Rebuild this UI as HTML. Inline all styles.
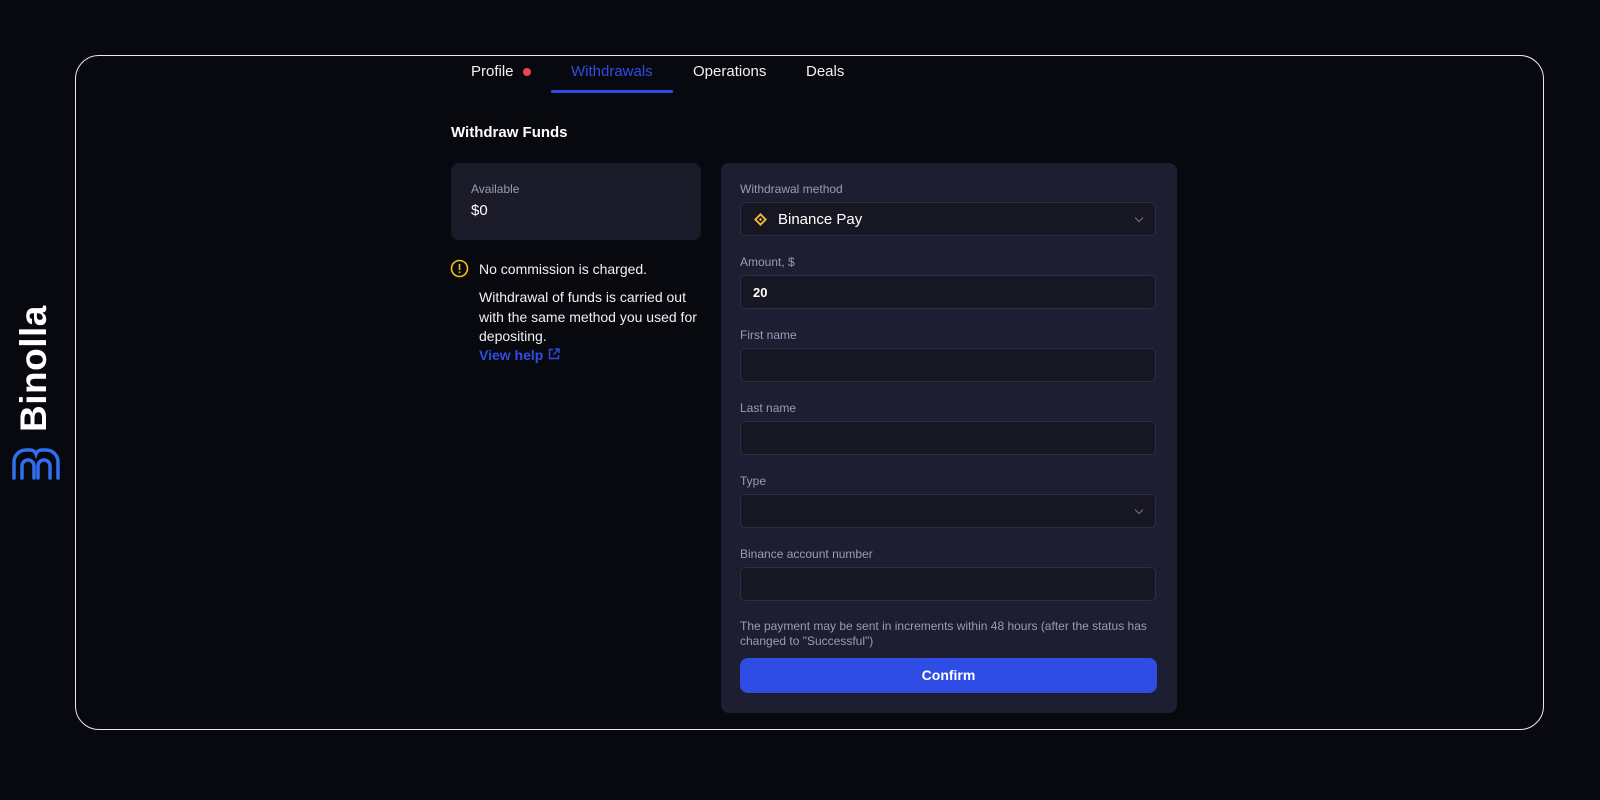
<!DOCTYPE html>
<html><head><meta charset="utf-8"><style>
*{margin:0;padding:0;box-sizing:border-box}
body{width:1600px;height:800px;background:#08090f;font-family:"Liberation Sans",sans-serif;position:relative;overflow:hidden;color:#fff}
.frame{position:absolute;left:75px;top:55px;width:1469px;height:675px;border:1px solid #e8e8ee;border-radius:24px}
.abs{position:absolute}
.tab{position:absolute;top:63px;font-size:15px;color:#f0f0f5}
.lbl{position:absolute;left:740px;font-size:12px;color:#9b9cb2}
.inp{position:absolute;left:740px;width:416px;height:34px;background:#171723;border:1px solid #2c2d41;border-radius:5px}
.chev{position:absolute;right:13px;top:12px;width:6px;height:6px;border-right:1px solid #777;border-bottom:1px solid #777;transform:rotate(45deg)}
</style></head><body>
<div class="frame"></div>
<div class="abs" style="left:15px;top:432px;transform-origin:0 0;transform:rotate(-90deg);font-size:37px;font-weight:bold;letter-spacing:0.5px;line-height:37px">Binolla</div>
<svg class="abs" style="left:10px;top:446px" width="52" height="34" viewBox="0 0 52 34"><g fill="none" stroke="#2f6ff0" stroke-width="3.5" stroke-linecap="round"><path d="M4 32V16a12 12 0 0 1 12-12h4a6 6 0 0 1 6 4a6 6 0 0 1 6-4h4a12 12 0 0 1 12 12V32"/><path d="M12 32V20a6 6 0 0 1 12 0V32"/><path d="M28 32V20a6 6 0 0 1 12 0V32"/></g></svg>

<div class="tab" style="left:471px">Profile</div>
<div class="abs" style="left:523px;top:68px;width:8px;height:8px;border-radius:50%;background:#f0434a"></div>
<div class="tab" style="left:571px;color:#2f4de5">Withdrawals</div>
<div class="abs" style="left:551px;top:90px;width:122px;height:3px;background:#2f4de5;border-radius:1px"></div>
<div class="tab" style="left:693px">Operations</div>
<div class="tab" style="left:806px">Deals</div>

<div class="abs" style="left:451px;top:124px;font-size:15px;font-weight:bold">Withdraw Funds</div>

<div class="abs" style="left:451px;top:163px;width:250px;height:77px;background:#1a1a28;border-radius:8px"></div>
<div class="abs" style="left:471px;top:182px;font-size:12px;color:#9b9cb2">Available</div>
<div class="abs" style="left:471px;top:202px;font-size:15px">$0</div>

<svg class="abs" style="left:450px;top:259px" width="19" height="19" viewBox="0 0 19 19"><circle cx="9.5" cy="9.5" r="8" fill="none" stroke="#f1c40f" stroke-width="1.6"/><rect x="8.7" y="5" width="1.6" height="6" fill="#f1c40f"/><rect x="8.7" y="12.5" width="1.6" height="1.6" fill="#f1c40f"/></svg>
<div class="abs" style="left:479px;top:261px;font-size:14px;color:#f0f0f5">No commission is charged.</div>
<div class="abs" style="left:479px;top:288px;font-size:14px;line-height:19.5px;color:#f0f0f5;width:230px">Withdrawal of funds is carried out with the same method you used for depositing.</div>
<div class="abs" style="left:479px;top:347px;font-size:14px;font-weight:bold;color:#2f4de5">View help</div>
<svg class="abs" style="left:548px;top:348px" width="12" height="12" viewBox="0 0 12 12"><g fill="none" stroke="#2f4de5" stroke-width="1.4"><path d="M5 1.5H1.5v9h9V7"/><path d="M7 1h4v4M11 1L5.5 6.5"/></g></svg>

<div class="abs" style="left:721px;top:163px;width:456px;height:550px;background:#1d1e31;border-radius:8px"></div>

<div class="lbl" style="top:182px">Withdrawal method</div>
<div class="inp" style="top:202px"><svg class="abs" style="left:12px;top:9px" width="15" height="15" viewBox="0 0 16 16"><g fill="none" stroke="#f3ba2f" stroke-width="2"><path d="M8 2.5L13.5 8 8 13.5 2.5 8z"/></g><path d="M8 6.3L9.7 8 8 9.7 6.3 8z" fill="#f3ba2f"/></svg><div class="abs" style="left:37px;top:8px;font-size:15px">Binance Pay</div><div class="chev"></div></div>

<div class="lbl" style="top:255px">Amount, $</div>
<div class="inp" style="top:275px"><div class="abs" style="left:12px;top:9px;font-size:13px;font-weight:bold">20</div></div>

<div class="lbl" style="top:328px">First name</div>
<div class="inp" style="top:348px"></div>

<div class="lbl" style="top:401px">Last name</div>
<div class="inp" style="top:421px"></div>

<div class="lbl" style="top:474px">Type</div>
<div class="inp" style="top:494px"><div class="chev"></div></div>

<div class="lbl" style="top:547px">Binance account number</div>
<div class="inp" style="top:567px"></div>

<div class="lbl" style="top:619px;width:420px;line-height:15px">The payment may be sent in increments within 48 hours (after the status has changed to "Successful")</div>

<div class="abs" style="left:740px;top:658px;width:417px;height:35px;background:#2f4de5;border-radius:8px;text-align:center;line-height:35px;font-size:14px;font-weight:bold">Confirm</div>
</body></html>
